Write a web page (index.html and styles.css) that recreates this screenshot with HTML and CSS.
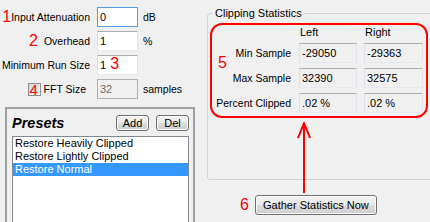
FILE: index.html
```html
<!DOCTYPE html>
<html lang="en">
<head>
    <meta charset="UTF-8">
    <meta name="viewport" content="width=device-width, initial-scale=1.0">
    <title>Declipper Settings</title>
    <link rel="stylesheet" href="styles.css">
</head>
<body>
    <div class="window">
        <div class="left">
            <div class="params">
                <div class="label"><span class="note">1</span>Input Attenuation</div>
                <div class="tb focused">0</div>
                <div class="unit">dB</div>

                <div class="label"><span class="note wide">2</span>Overhead</div>
                <div class="tb">1</div>
                <div class="unit">%</div>

                <div class="label">Minimum Run Size</div>
                <div class="tb">1<span class="note inline">3</span></div>
                <div class="unit"></div>

                <div class="label check-label"><span class="checkbox"><span class="note over">4</span></span>FFT Size</div>
                <div class="tb disabled">32</div>
                <div class="unit">samples</div>
            </div>

            <div class="presets">
                <div class="presets-head">
                    <h2>Presets</h2>
                    <button>Add</button>
                    <button>Del</button>
                </div>
                <ul class="preset-list">
                    <li>Restore Heavily Clipped</li>
                    <li>Restore Lightly Clipped</li>
                    <li class="selected">Restore Normal</li>
                </ul>
            </div>
        </div>

        <div class="right">
            <fieldset class="group">
                <legend>Clipping Statistics</legend>
                <div class="highlight">
                    <span class="note five">5</span>
                    <div class="stats">
                        <span></span>
                        <span class="col">Left</span>
                        <span class="col">Right</span>

                        <span class="stat-label">Min Sample</span>
                        <span class="tb ro">-29050</span>
                        <span class="tb ro">-29363</span>

                        <span class="stat-label">Max Sample</span>
                        <span class="tb ro">32390</span>
                        <span class="tb ro">32575</span>

                        <span class="stat-label">Percent Clipped</span>
                        <span class="tb ro">.02 %</span>
                        <span class="tb ro">.02 %</span>
                    </div>
                </div>
            </fieldset>

            <div class="gather">
                <span class="note">6</span>
                <button class="gather-btn">Gather Statistics Now</button>
            </div>

            <!-- arrow pointing from the button up to the stats -->
            <svg class="arrow" width="14" height="73" viewBox="0 0 14 73">
                <path d="M7 2 V72" stroke="#f00" stroke-width="2" fill="none"/>
                <path d="M1 17 L7 2 L13 17" stroke="#f00" stroke-width="2" fill="none" stroke-linejoin="round"/>
            </svg>
        </div>
    </div>
</body>
</html>
```

FILE: styles.css
```css
/* Basic styling */
body {
    margin: 0;
    padding: 0;
    background-color: #f0f0f0;
    font-family: "Liberation Sans", Arial, sans-serif;
    font-size: 10.5px;
    color: #000;
    overflow: hidden;
}
.window {
    display: flex;
    width: 430px;
    height: 222px;
    overflow: hidden;
}
.note {
    color: #f00;
    font-size: 16px;
    line-height: 16px;
}

/* Left side: parameters */
.left {
    width: 200px;
    flex-shrink: 0;
    padding-top: 7px;
}
.params {
    display: grid;
    grid-template-columns: 97px 46px 1fr;
    grid-auto-rows: 20px;
    row-gap: 4px;
    align-items: center;
}
.label {
    display: flex;
    justify-content: flex-end;
    align-items: center;
    padding-right: 7px;
    white-space: nowrap;
}
.note.wide {
    margin-right: 6px;
}
.note.inline {
    margin-left: 4px;
}
.check-label {
    padding-right: 11px;
}
.checkbox {
    position: relative;
    width: 13px;
    height: 13px;
    box-sizing: border-box;
    border: 1px solid #8e8f8f;
    background: linear-gradient(135deg, #d6d6d6, #f4f4f4);
    margin-right: 3px;
}
.note.over {
    position: absolute;
    left: 1px;
    top: -2px;
    font-size: 15px;
}
.tb {
    display: block;
    width: 41px;
    height: 20px;
    box-sizing: border-box;
    border: 1px solid;
    border-color: #abadb3 #e2e3ea #e3e9ef #dbdfe6;
    background-color: #fff;
    padding: 0 2px;
    line-height: 18px;
    font-size: 11px;
    white-space: nowrap;
}
.tb.focused {
    border-color: #569de5;
}
.tb.disabled {
    background-color: #f0f0f0;
    border-color: #adb2b5;
    color: #6d6d6d;
}

/* Presets */
.presets {
    margin: 8px 5px 0;
    height: 130px;
    border: 2px solid #a0a0a0;
    padding: 6px 4px 0 5px;
}
.presets-head {
    display: flex;
    align-items: center;
    gap: 7px;
    height: 16px;
    margin-bottom: 5px;
}
.presets-head h2 {
    margin: 0 auto 0 0;
    font-size: 14.5px;
    font-weight: bold;
    font-style: italic;
}
button {
    font: inherit;
    font-size: 11px;
    color: #000;
    width: 33px;
    height: 16px;
    padding: 0;
    border: 1px solid #707070;
    border-radius: 3px;
    background: linear-gradient(#f2f2f2, #ebebeb 50%, #dddddd 50%, #cfcfcf);
    box-shadow: inset 0 0 0 1px #fcfcfc;
}
.preset-list {
    list-style-type: none;
    margin: 0;
    padding: 0;
    width: 177px;
    height: 100px;
    box-sizing: border-box;
    border: 1px solid #828790;
    background-color: #fff;
    font-size: 11px;
}
.preset-list li {
    line-height: 13px;
    padding-left: 2px;
}
.preset-list .selected {
    background-color: #3399ff;
    color: #fff;
}

/* Right side: statistics */
.right {
    position: relative;
    width: 229px;
    flex-shrink: 0;
    margin-left: 7px;
    padding-top: 7px;
}
.group {
    margin: 0;
    padding: 0;
    min-width: 0;
    width: 229px;
    height: 173px;
    box-sizing: border-box;
    border: 1px solid #cdd5da;
    border-radius: 3px;
}
.group legend {
    margin-left: 5px;
    padding: 0 2px;
    line-height: 13px;
    font-size: 11px;
}
.highlight {
    position: relative;
    margin: 3px 0 0 2px;
    width: 218px;
    box-sizing: border-box;
    border: 2px solid #f00;
    border-radius: 12px;
    padding: 0 3px 3px 0;
}
.note.five {
    position: absolute;
    left: 6px;
    top: 30px;
}
.stats {
    display: grid;
    grid-template-columns: 80px 58px 59px;
    grid-template-rows: 13px repeat(3, 20px);
    column-gap: 7px;
    row-gap: 5px;
    align-items: center;
}
.stat-label {
    text-align: right;
    padding-right: 1px;
    white-space: nowrap;
}
.col {
    padding-left: 1px;
    font-size: 11px;
}
.tb.ro {
    width: auto;
    background-color: #f0f0f0;
}
.gather {
    display: flex;
    align-items: center;
    gap: 6px;
    margin: 15px 0 0 33px;
}
.gather-btn {
    width: 122px;
    height: 20px;
}
.arrow {
    position: absolute;
    left: 90px;
    top: 121px;
}
```
